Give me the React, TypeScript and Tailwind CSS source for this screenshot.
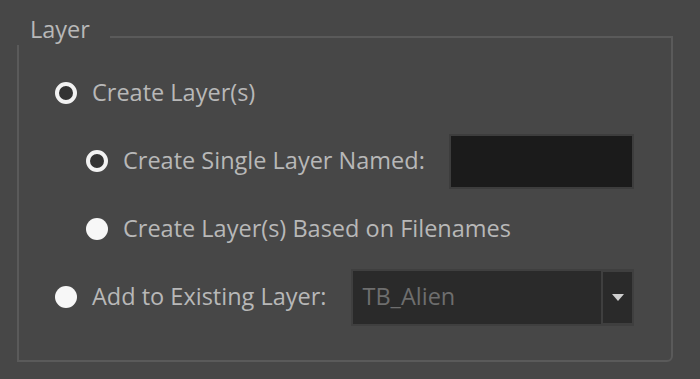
import React from "react";

function Radio({ ring }: { ring?: boolean }) {
  return ring ? (
    <span className="w-[22px] h-[22px] rounded-full border-[4px] border-[#f2f2f2] bg-[#333333] shrink-0" />
  ) : (
    <span className="w-[22px] h-[22px] rounded-full bg-[#f7f7f7] shrink-0" />
  );
}

export default function App() {
  return (
    <div
      className="w-[700px] h-[379px] bg-[#474747] pt-[36px] pl-[17px] text-[#b8b8b8]"
      style={{ fontFamily: '"Open Sans", "Noto Sans", sans-serif' }}
    >
      <div className="relative w-[656px] h-[326px] border-2 border-[#5a5a5a] rounded-br-[6px] pt-[21px]">
        <span className="absolute left-[-2px] top-[-24px] h-[31px] bg-[#474747] pl-[13px] pr-[20px] text-[23.5px] leading-[30px]">
          Layer
        </span>
        <div className="flex flex-col text-[23.5px]">
          <div className="h-[68px] flex items-center pl-[36px] gap-[15px]">
            <Radio ring />
            <span>Create Layer(s)</span>
          </div>
          <div className="h-[68px] flex items-center pl-[67px]">
            <Radio ring />
            <span className="ml-[15px]">Create Single Layer Named:</span>
            <div className="ml-[24px] w-[185px] h-[55px] bg-[#1b1b1b] border-2 border-[#3d3d3d]" />
          </div>
          <div className="h-[68px] flex items-center pl-[67px] gap-[15px]">
            <Radio />
            <span>Create Layer(s) Based on Filenames</span>
          </div>
          <div className="h-[68px] flex items-center pl-[36px]">
            <Radio />
            <span className="ml-[15px]">Add to Existing Layer:</span>
            <div className="ml-[25px] w-[283px] h-[57px] bg-[#3f3f3f] p-[2px] flex gap-[2px]">
              <div className="flex-1 bg-[#2a2a2a] flex items-center pl-[9px] text-[#6e6e6e]">
                TB_Alien
              </div>
              <div className="w-[29px] my-[1px] bg-[#2a2a2a] flex items-center justify-center">
                <svg width="12" height="7" viewBox="0 0 12 7">
                  <path d="M0 0 L12 0 L6 7 Z" fill="#cfcfcf" />
                </svg>
              </div>
            </div>
          </div>
        </div>
      </div>
    </div>
  );
}
